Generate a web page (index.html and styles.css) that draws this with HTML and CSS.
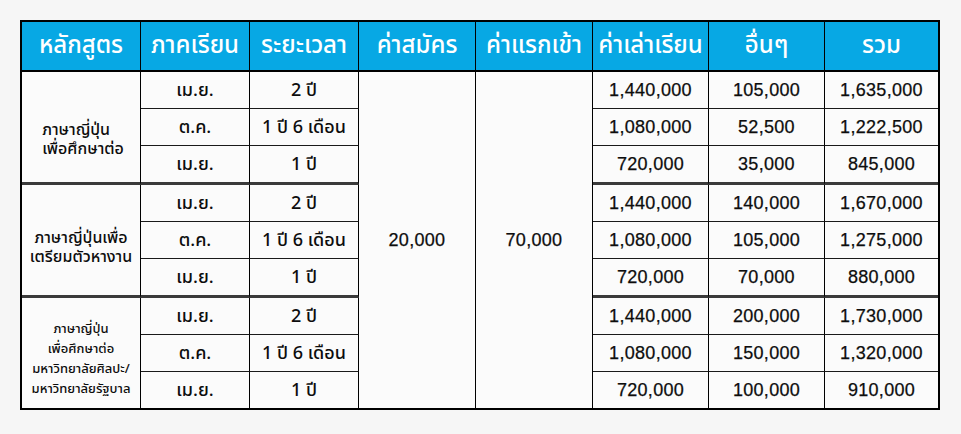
FILE: index.html
```html
<!DOCTYPE html>
<html lang="th">
<head>
<meta charset="utf-8">
<title>ค่าเรียน</title>
<link rel="stylesheet" href="styles.css">
</head>
<body>
<div class="page">
  <table class="fees">
    <colgroup>
      <col class="c-course"><col class="c-term"><col class="c-dur"><col class="c-fee">
      <col class="c-fee"><col class="c-tuition"><col class="c-other"><col class="c-total">
    </colgroup>
    <thead>
      <tr class="head">
        <th>หลักสูตร</th>
        <th>ภาคเรียน</th>
        <th>ระยะเวลา</th>
        <th>ค่าสมัคร</th>
        <th>ค่าแรกเข้า</th>
        <th>ค่าเล่าเรียน</th>
        <th>อื่นๆ</th>
        <th class="last">รวม</th>
      </tr>
    </thead>
    <tbody>
      <tr>
        <td rowspan="3" class="course g1 sep"><span class="course-left">ภาษาญี่ปุ่น<br>เพื่อศึกษาต่อ</span></td>
        <td class="th-text">เม.ย.</td>
        <td class="th-text">2 ปี</td>
        <td rowspan="9" class="num fee">20,000</td>
        <td rowspan="9" class="num fee">70,000</td>
        <td class="num">1,440,000</td>
        <td class="num">105,000</td>
        <td class="num last">1,635,000</td>
      </tr>
      <tr>
        <td class="th-text">ต.ค.</td>
        <td class="th-text">1 ปี 6 เดือน</td>
        <td class="num">1,080,000</td>
        <td class="num">52,500</td>
        <td class="num last">1,222,500</td>
      </tr>
      <tr class="group-end">
        <td class="th-text sep">เม.ย.</td>
        <td class="th-text sep">1 ปี</td>
        <td class="num sep">720,000</td>
        <td class="num sep">35,000</td>
        <td class="num sep last">845,000</td>
      </tr>
      <tr>
        <td rowspan="3" class="course g2 sep">ภาษาญี่ปุ่นเพื่อ<br>เตรียมตัวหางาน</td>
        <td class="th-text">เม.ย.</td>
        <td class="th-text">2 ปี</td>
        <td class="num">1,440,000</td>
        <td class="num">140,000</td>
        <td class="num last">1,670,000</td>
      </tr>
      <tr>
        <td class="th-text">ต.ค.</td>
        <td class="th-text">1 ปี 6 เดือน</td>
        <td class="num">1,080,000</td>
        <td class="num">105,000</td>
        <td class="num last">1,275,000</td>
      </tr>
      <tr class="group-end">
        <td class="th-text sep">เม.ย.</td>
        <td class="th-text sep">1 ปี</td>
        <td class="num sep">720,000</td>
        <td class="num sep">70,000</td>
        <td class="num sep last">880,000</td>
      </tr>
      <tr>
        <td rowspan="3" class="course small final">ภาษาญี่ปุ่น<br>เพื่อศึกษาต่อ<br>มหาวิทยาลัยศิลปะ/<br>มหาวิทยาลัยรัฐบาล</td>
        <td class="th-text">เม.ย.</td>
        <td class="th-text">2 ปี</td>
        <td class="num">1,440,000</td>
        <td class="num">200,000</td>
        <td class="num last">1,730,000</td>
      </tr>
      <tr>
        <td class="th-text">ต.ค.</td>
        <td class="th-text">1 ปี 6 เดือน</td>
        <td class="num">1,080,000</td>
        <td class="num">150,000</td>
        <td class="num last">1,320,000</td>
      </tr>
      <tr class="final-row">
        <td class="th-text final">เม.ย.</td>
        <td class="th-text final">1 ปี</td>
        <td class="num final">720,000</td>
        <td class="num final">100,000</td>
        <td class="num final last">910,000</td>
      </tr>
    </tbody>
  </table>
</div>
</body>
</html>
```

FILE: styles.css
```css
html, body {
  margin: 0;
  padding: 0;
  background: #f6f6f6;
}

.page {
  padding: 20px 0 0 20px;
  font-family: "Noto Sans Thai", "Liberation Sans", "DejaVu Sans", sans-serif;
}

.fees {
  width: 920px;
  table-layout: fixed;
  border-collapse: separate;
  border-spacing: 0;
  border: 2px solid #000;
  background: #fbfbfb;
}

.c-course { width: 119px; }
.c-term { width: 109px; }
.c-dur { width: 109px; }
.c-fee { width: 117px; }
.c-tuition { width: 116px; }
.c-other { width: 116px; }
.c-total { width: 113px; }

.fees th,
.fees td {
  padding: 0;
  border-right: 1px solid #000;
  border-bottom: 1px solid #1a1a1a;
  text-align: center;
  vertical-align: middle;
  color: #0d0d0d;
}

.fees .last { border-right: 0; }

.head { height: 50px; }
.fees th {
  background: #07a8e4;
  color: #fff;
  font-size: 24px;
  font-weight: 500;
  border-bottom: 2px solid #000;
  white-space: nowrap;
}

.fees tbody tr { height: 37px; }
.fees tbody tr.group-end { height: 39px; }
.fees tbody tr.final-row { height: 36px; }

.fees td.sep { border-bottom: 3px solid #3a3a3a; }
.fees td.final,
.fees td.fee { border-bottom: 0; }

.th-text {
  font-size: 18px;
  font-weight: 500;
  white-space: nowrap;
}

.num {
  font-family: "Liberation Sans", Arial, sans-serif;
  font-size: 18px;
  letter-spacing: 0.3px;
  white-space: nowrap;
  -webkit-text-stroke: 0.25px #0d0d0d;
}

.course {
  font-size: 16px;
  line-height: 19px;
  font-weight: 500;
}

.course.g1 { padding-top: 26px; padding-left: 4px; }
.course.g2 { padding-top: 16px; }

.course-left {
  display: inline-block;
  text-align: left;
}

.course.small {
  font-size: 13px;
  line-height: 20px;
  padding-top: 12px;
}
```
